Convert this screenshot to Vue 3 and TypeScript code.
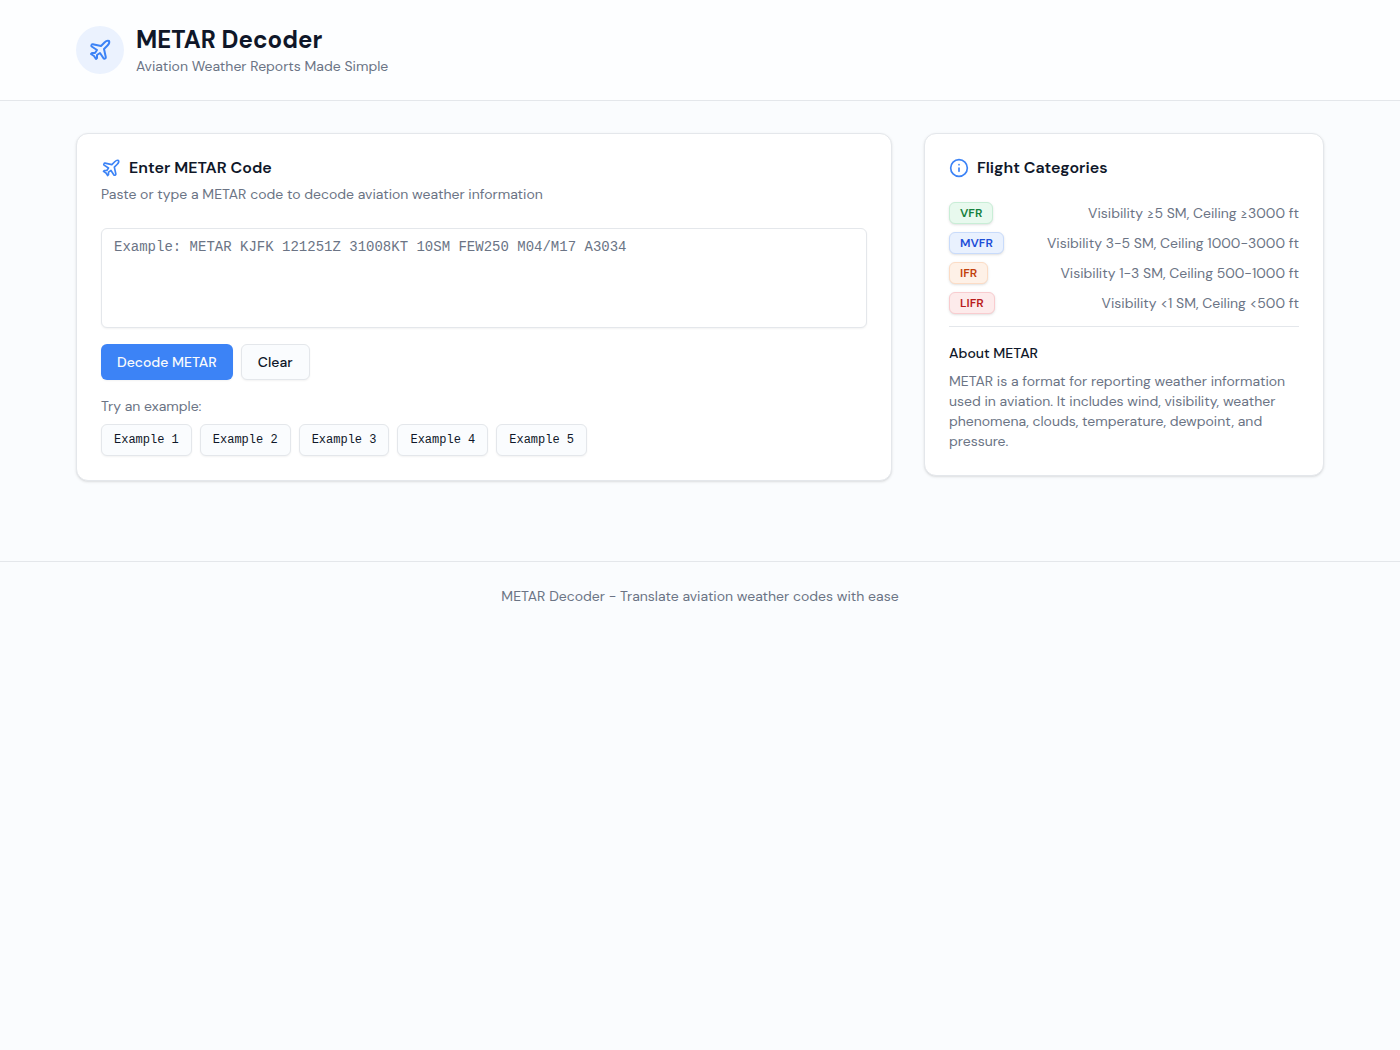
<script setup lang="ts">
import { ref } from 'vue'

interface Category {
  name: string
  rule: string
}

const categories: Category[] = [
  { name: 'VFR', rule: 'Visibility ≥5 SM, Ceiling ≥3000 ft' },
  { name: 'MVFR', rule: 'Visibility 3-5 SM, Ceiling 1000-3000 ft' },
  { name: 'IFR', rule: 'Visibility 1-3 SM, Ceiling 500-1000 ft' },
  { name: 'LIFR', rule: 'Visibility <1 SM, Ceiling <500 ft' },
]

const examples: string[] = [
  'METAR KJFK 121251Z 31008KT 10SM FEW250 M04/M17 A3034',
  'METAR EGLL 121250Z 24015KT 9999 SCT035 12/07 Q1013',
  'METAR KSFO 121256Z 28012KT 6SM BR BKN012 14/12 A3001',
  'METAR KORD 121251Z 36018G28KT 2SM SN OVC008 M02/M04 A2978',
  'METAR KDEN 121253Z 00000KT 1/4SM FG VV002 01/01 A3012',
]

const planePath =
  'M17.8 19.2 16 11l3.5-3.5C21 6 21.5 4 21 3c-1-.5-3 0-4.5 1.5L13 8 4.8 6.2c-.5-.1-.9.1-1.1.5l-.3.5c-.2.5-.1 1 .3 1.3L9 12l-2 3H4l-1 1 3 2 2 3 1-1v-3l3-2 3.5 5.3c.3.4.8.5 1.3.3l.5-.2c.4-.3.6-.7.5-1.2z'

const code = ref('')
</script>

<template>
  <div class="page">
    <header class="site-header">
      <div class="container brand">
        <span class="brand-mark">
          <svg class="icon icon-large" viewBox="0 0 24 24" aria-hidden="true"><path :d="planePath" /></svg>
        </span>
        <div>
          <h1>METAR Decoder</h1>
          <p class="muted">Aviation Weather Reports Made Simple</p>
        </div>
      </div>
    </header>

    <main class="container layout">
      <section class="card">
        <h2>
          <svg class="icon" viewBox="0 0 24 24" aria-hidden="true"><path :d="planePath" /></svg>
          <label for="metar">Enter METAR Code</label>
        </h2>
        <p class="muted description">Paste or type a METAR code to decode aviation weather information</p>
        <form class="entry" @submit.prevent>
          <textarea
            id="metar"
            v-model="code"
            placeholder="Example: METAR KJFK 121251Z 31008KT 10SM FEW250 M04/M17 A3034"
          ></textarea>
          <div class="row">
            <button type="submit" class="button primary">Decode METAR</button>
            <button type="button" class="button" @click="code = ''">Clear</button>
          </div>
          <div class="examples">
            <p class="muted">Try an example:</p>
            <div class="row">
              <button
                v-for="(example, index) in examples"
                :key="example"
                type="button"
                class="button small"
                @click="code = example"
              >Example {{ index + 1 }}</button>
            </div>
          </div>
        </form>
      </section>

      <aside class="card">
        <h2>
          <svg class="icon" viewBox="0 0 24 24" aria-hidden="true">
            <circle cx="12" cy="12" r="10" />
            <path d="M12 16v-4M12 8h.01" />
          </svg>
          Flight Categories
        </h2>
        <ul class="categories">
          <li v-for="category in categories" :key="category.name">
            <span class="badge" :class="category.name.toLowerCase()">{{ category.name }}</span>
            <span class="muted">{{ category.rule }}</span>
          </li>
        </ul>
        <div class="about">
          <h3>About METAR</h3>
          <p class="muted">
            METAR is a format for reporting weather information used in aviation. It includes wind,
            visibility, weather phenomena, clouds, temperature, dewpoint, and pressure.
          </p>
        </div>
      </aside>
    </main>

    <footer class="site-footer">
      <p class="container muted">METAR Decoder - Translate aviation weather codes with ease</p>
    </footer>
  </div>
</template>

<style>
body {
  margin: 0;
  background: #fafcfe;
}
</style>

<style scoped>
.page {
  min-height: 100vh;
  background: #fafcfe;
  color: #0f1729;
  font-family: "DM Sans", Inter, "Open Sans", sans-serif;
  font-size: 14px;
  line-height: 20px;
}

.page *,
.page *::before {
  box-sizing: border-box;
}

h1,
h2,
h3,
p,
ul {
  margin: 0;
  padding: 0;
}

.container {
  max-width: 1280px;
  margin: 0 auto;
  padding-left: 16px;
  padding-right: 16px;
}

.muted {
  color: #6b7485;
}

.icon {
  width: 20px;
  height: 20px;
  flex: none;
  fill: none;
  stroke: #3c83f6;
  stroke-width: 2;
  stroke-linecap: round;
  stroke-linejoin: round;
}

.icon-large {
  width: 24px;
  height: 24px;
}

.site-header {
  padding: 24px 0;
  background: #fdfeff;
  border-bottom: 1px solid #e4e7eb;
}

.brand {
  display: flex;
  align-items: center;
  gap: 12px;
}

.brand-mark {
  display: flex;
  align-items: center;
  justify-content: center;
  width: 48px;
  height: 48px;
  border-radius: 50%;
  background: #ebf2fe;
}

h1 {
  font-size: 24px;
  line-height: 32px;
  font-weight: 700;
}

.layout {
  display: grid;
  grid-template-columns: minmax(0, 1fr) 400px;
  align-items: start;
  gap: 32px;
  padding-top: 32px;
  padding-bottom: 32px;
}

.card {
  padding: 24px;
  background: #fff;
  border: 1px solid #e4e7eb;
  border-radius: 12px;
  box-shadow: 0 1px 3px rgb(0 0 0 / 10%), 0 1px 2px -1px rgb(0 0 0 / 10%);
}

h2 {
  display: flex;
  align-items: center;
  gap: 8px;
  font-size: 16px;
  line-height: 20px;
  font-weight: 600;
}

.description {
  margin-top: 6px;
}

.entry {
  display: flex;
  flex-direction: column;
  gap: 16px;
  margin-top: 24px;
}

textarea {
  display: block;
  width: 100%;
  height: 100px;
  padding: 8px 12px;
  resize: none;
  border: 1px solid #e4e7eb;
  border-radius: 6px;
  background: #fff;
  color: inherit;
  font: 14px/20px "Liberation Mono", monospace;
  box-shadow: 0 1px 2px rgb(0 0 0 / 5%);
}

textarea::placeholder {
  color: #6b7485;
}

.row {
  display: flex;
  flex-wrap: wrap;
  gap: 8px;
}

.button {
  height: 36px;
  padding: 0 16px;
  border: 1px solid #e4e7eb;
  border-radius: 6px;
  background: #fafcfe;
  color: #0f1729;
  font: inherit;
  font-weight: 500;
  box-shadow: 0 1px 2px rgb(0 0 0 / 5%);
}

.button.primary {
  border: 0;
  background: #3c83f6;
  color: #f8fafc;
}

.button.small {
  height: 32px;
  padding: 0 12px;
  font: 12px/16px "Liberation Mono", monospace;
}

.examples {
  display: flex;
  flex-direction: column;
  gap: 8px;
}

.categories {
  display: flex;
  flex-direction: column;
  gap: 8px;
  margin-top: 24px;
  list-style: none;
}

.categories li {
  display: flex;
  align-items: center;
  justify-content: space-between;
  height: 22px;
}

.badge {
  padding: 2px 10px;
  border: 1px solid;
  border-radius: 6px;
  font-size: 12px;
  line-height: 16px;
  font-weight: 600;
  box-shadow: 0 1px 3px rgb(0 0 0 / 10%), 0 1px 2px -1px rgb(0 0 0 / 10%);
}

.vfr {
  background: #e8f9ee;
  border-color: #c8eed6;
  color: #15803d;
}

.mvfr {
  background: #e9f1fe;
  border-color: #c8dbfb;
  color: #1d4ed8;
}

.ifr {
  background: #fef1e7;
  border-color: #fcdcc5;
  color: #c2410c;
}

.lifr {
  background: #fdebeb;
  border-color: #f9cccf;
  color: #b91c1c;
}

.about {
  margin-top: 12px;
  padding-top: 16px;
  border-top: 1px solid #e4e7eb;
}

h3 {
  margin-bottom: 8px;
  font-size: 14px;
  line-height: 20px;
  font-weight: 500;
}

.site-footer {
  margin-top: 48px;
  padding: 24px 0;
  border-top: 1px solid #e4e7eb;
  text-align: center;
}

@media (max-width: 1023px) {
  .layout {
    grid-template-columns: minmax(0, 1fr);
  }
}
</style>
